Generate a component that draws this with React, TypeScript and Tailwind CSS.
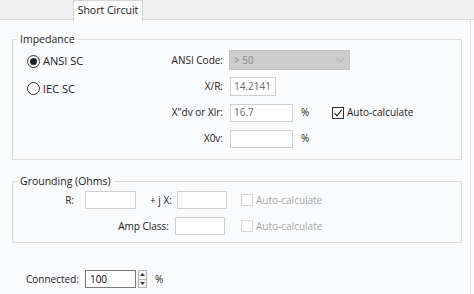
import React from 'react'

const font = { fontFamily: '"Open Sans", "Noto Sans", Arial, sans-serif' }

function TextBox({ value = '', w, h = 'h-[18px]', muted = true }: { value?: string; w: string; h?: string; muted?: boolean }) {
  return (
    <div className={`${w} ${h} border border-[#cfcfcf] bg-white flex items-center px-[3px] ${muted ? 'text-[#6b6b6b]' : 'text-black'}`}>
      {value}
    </div>
  )
}

function Check({ checked = false, disabled = false, label }: { checked?: boolean; disabled?: boolean; label: string }) {
  return (
    <div className={`flex items-center gap-[3px] ${disabled ? 'text-[#a6a6a6]' : 'text-[#1a1a1a]'}`}>
      <div className={`w-[12px] h-[12px] border bg-white flex items-center justify-center ${disabled ? 'border-[#d6d6d6]' : 'border-[#333]'}`}>
        {checked && (
          <svg width="10" height="10" viewBox="0 0 10 10">
            <path d="M1.5 5.2 L4 7.8 L8.7 1.8" fill="none" stroke="#222" strokeWidth="1.2" />
          </svg>
        )}
      </div>
      <span>{label}</span>
    </div>
  )
}

function Radio({ checked = false, label }: { checked?: boolean; label: string }) {
  return (
    <div className="flex items-center gap-[3px] text-[#1a1a1a]">
      <div className="w-[13px] h-[13px] rounded-full border border-[#333] bg-white flex items-center justify-center">
        {checked && <div className="w-[7px] h-[7px] rounded-full bg-[#222]" />}
      </div>
      <span className="text-[11px]">{label}</span>
    </div>
  )
}

export default function App() {
  return (
    <div className="w-[474px] h-[294px] bg-[#fafbfc] text-[10px] text-[#1a1a1a] overflow-hidden flex flex-col" style={font}>
      {/* tab strip */}
      <div className="h-[20px] shrink-0 bg-[#f0f0f0] border-b border-[#dadada] flex">
        <div className="ml-[73px] w-[70px] h-[21px] bg-[#fbfbfb] border-x border-t border-[#d6d6d6] flex items-center justify-center text-[10.5px]">
          Short Circuit
        </div>
      </div>

      <div className="flex-1 flex flex-col border-r border-[#e2e2e2] mr-[3px]">
        {/* Impedance */}
        <fieldset className="ml-[12px] mr-[8px] mt-[12px] h-[128px] border border-[#dcdcdc] flex">
          <legend className="ml-[4px] px-[3px] text-[10.5px] leading-[14px]">Impedance</legend>
          <div className="w-[147px] pl-[14px] pt-[7px] flex flex-col gap-[11px]">
            <Radio checked label="ANSI SC" />
            <Radio label="IEC SC" />
          </div>
          <div className="flex flex-col pt-[4px] gap-[7px]">
            <div className="flex items-center gap-[6px]">
              <span className="w-[63px] text-right">ANSI Code:</span>
              <div className="w-[121px] h-[20px] bg-[#cccccc] border border-[#c4c4c4] flex items-center justify-between px-[4px] text-[#8a8a8a]">
                <span>&gt; 50</span>
                <svg width="9" height="6" viewBox="0 0 9 6">
                  <path d="M0.5 0.8 L4.5 4.8 L8.5 0.8" fill="none" stroke="#a8a8a8" strokeWidth="1" />
                </svg>
              </div>
            </div>
            <div className="flex items-center gap-[7px] h-[19px]">
              <span className="w-[63px] text-right">X/R:</span>
              <TextBox value="14.2141" w="w-[46px]" h="h-[19px]" />
            </div>
            <div className="flex items-center gap-[7px] h-[19px]">
              <span className="w-[63px] text-right whitespace-nowrap">X"dv or Xlr:</span>
              <TextBox value="16.7" w="w-[63px]" h="h-[18px]" />
              <span className="ml-[1px] w-[24px]">%</span>
              <Check checked label="Auto-calculate" />
            </div>
            <div className="flex items-center gap-[7px] h-[19px]">
              <span className="w-[63px] text-right">X0v:</span>
              <TextBox w="w-[63px]" h="h-[18px]" />
              <span className="ml-[1px]">%</span>
            </div>
          </div>
        </fieldset>

        {/* Grounding */}
        <fieldset className="ml-[12px] mr-[8px] mt-[14px] h-[69px] border border-[#dcdcdc] flex flex-col gap-[8px] pt-[3px]">
          <legend className="ml-[4px] px-[3px] text-[10.5px] leading-[14px]">Grounding (Ohms)</legend>
          <div className="flex items-center h-[18px]">
            <span className="w-[61px] text-right">R:</span>
            <div className="ml-[11px]">
              <TextBox w="w-[51px]" />
            </div>
            <span className="ml-[14px] w-[27px]">+ j X:</span>
            <TextBox w="w-[50px]" />
            <div className="ml-[14px]">
              <Check disabled label="Auto-calculate" />
            </div>
          </div>
          <div className="flex items-center h-[18px]">
            <span className="w-[156px] text-right">Amp Class:</span>
            <div className="ml-[6px]">
              <TextBox w="w-[50px]" />
            </div>
            <div className="ml-[16px]">
              <Check disabled label="Auto-calculate" />
            </div>
          </div>
        </fieldset>

        {/* Connected */}
        <div className="mt-[27px] ml-[26px] flex items-center h-[18px]">
          <span>Connected:</span>
          <div className="ml-[6px] w-[51px] h-[18px] border border-[#7a7a7a] bg-white flex items-center px-[4px] text-black">100</div>
          <div className="ml-[2px] w-[9px] h-[18px] flex flex-col border border-[#b5b5b5] bg-[#f2f2f2]">
            <div className="flex-1 flex items-center justify-center border-b border-[#b5b5b5]">
              <svg width="5" height="3" viewBox="0 0 5 3"><path d="M0 3 L2.5 0 L5 3 Z" fill="#333" /></svg>
            </div>
            <div className="flex-1 flex items-center justify-center">
              <svg width="5" height="3" viewBox="0 0 5 3"><path d="M0 0 L2.5 3 L5 0 Z" fill="#333" /></svg>
            </div>
          </div>
          <span className="ml-[8px]">%</span>
        </div>
      </div>
    </div>
  )
}
